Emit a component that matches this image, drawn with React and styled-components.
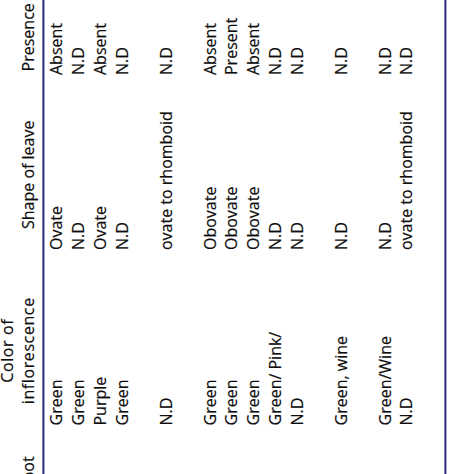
import React from "react";
import styled, { createGlobalStyle } from "styled-components";

const GlobalStyle = createGlobalStyle`
  html, body { margin: 0; padding: 0; background: #ffffff; }
`;

const COLS = "88.5px 175.5px 175px 1fr";
const RULE = "#2c2a7e";

const Frame = styled.div`
  position: relative;
  width: 474px;
  height: 474px;
  overflow: hidden;
  background: #ffffff;
`;

/* The whole table is printed sideways: rotated a quarter turn counter-clockwise. */
const Table = styled.div`
  width: 520px;
  transform-origin: 0 0;
  transform: translate(-2.6px, 514px) rotate(-90deg);
  font-family: "Open Sans", "Noto Sans", "Liberation Sans", sans-serif;
  font-size: 16px;
  color: #0d0d0d;
  -webkit-text-stroke: 0.2px #0d0d0d;
`;

const HeaderRow = styled.div`
  display: grid;
  grid-template-columns: ${COLS};
  align-items: end;
  line-height: 21px;
  padding-bottom: 3.3px;
  border-bottom: 2px solid ${RULE};
`;

const HeaderCell = styled.div`
  white-space: nowrap;
  text-align: ${(p) => p.$align || "left"};
  padding-left: ${(p) => p.$pl || 0}px;
  padding-right: ${(p) => p.$pr || 0}px;
  letter-spacing: ${(p) => p.$ls || 0}px;
`;

const Body = styled.div`
  padding: 2.2px 0 25.2px;
  border-bottom: 2px solid ${RULE};
`;

const Row = styled.div`
  display: grid;
  grid-template-columns: ${COLS};
  height: 21.875px;
  line-height: 21.875px;
`;

const Cell = styled.div`
  white-space: nowrap;
`;

const rows = [
  ["Green", "Ovate", "Absent"],
  ["Green", "N.D", "N.D"],
  ["Purple", "Ovate", "Absent"],
  ["Green", "N.D", "N.D"],
  ["", "", ""],
  ["N.D", "ovate to rhomboid", "N.D"],
  ["", "", ""],
  ["Green", "Obovate", "Absent"],
  ["Green", "Obovate", "Present"],
  ["Green", "Obovate", "Absent"],
  ["Green/ Pink/", "N.D", "N.D"],
  ["N.D", "N.D", "N.D"],
  ["", "", ""],
  ["Green, wine", "N.D", "N.D"],
  ["", "", ""],
  ["Green/Wine", "N.D", "N.D"],
  ["N.D", "ovate to rhomboid", "N.D"],
];

export default function App() {
  return (
    <>
      <GlobalStyle />
      <Frame>
        <Table>
          <HeaderRow>
            <HeaderCell $align="right" $pr={30.9}>Root</HeaderCell>
            <HeaderCell $align="center" $pr={26} $ls={0.6}>
              Color of
              <br />
              inflorescence
            </HeaderCell>
            <HeaderCell $pl={21}>Shape of leave</HeaderCell>
            <HeaderCell $pl={3.6}>Presence</HeaderCell>
          </HeaderRow>
          <Body>
            {rows.map((r, i) => (
              <Row key={i}>
                <Cell />
                <Cell>{r[0]}</Cell>
                <Cell>{r[1]}</Cell>
                <Cell>{r[2]}</Cell>
              </Row>
            ))}
          </Body>
        </Table>
      </Frame>
    </>
  );
}
